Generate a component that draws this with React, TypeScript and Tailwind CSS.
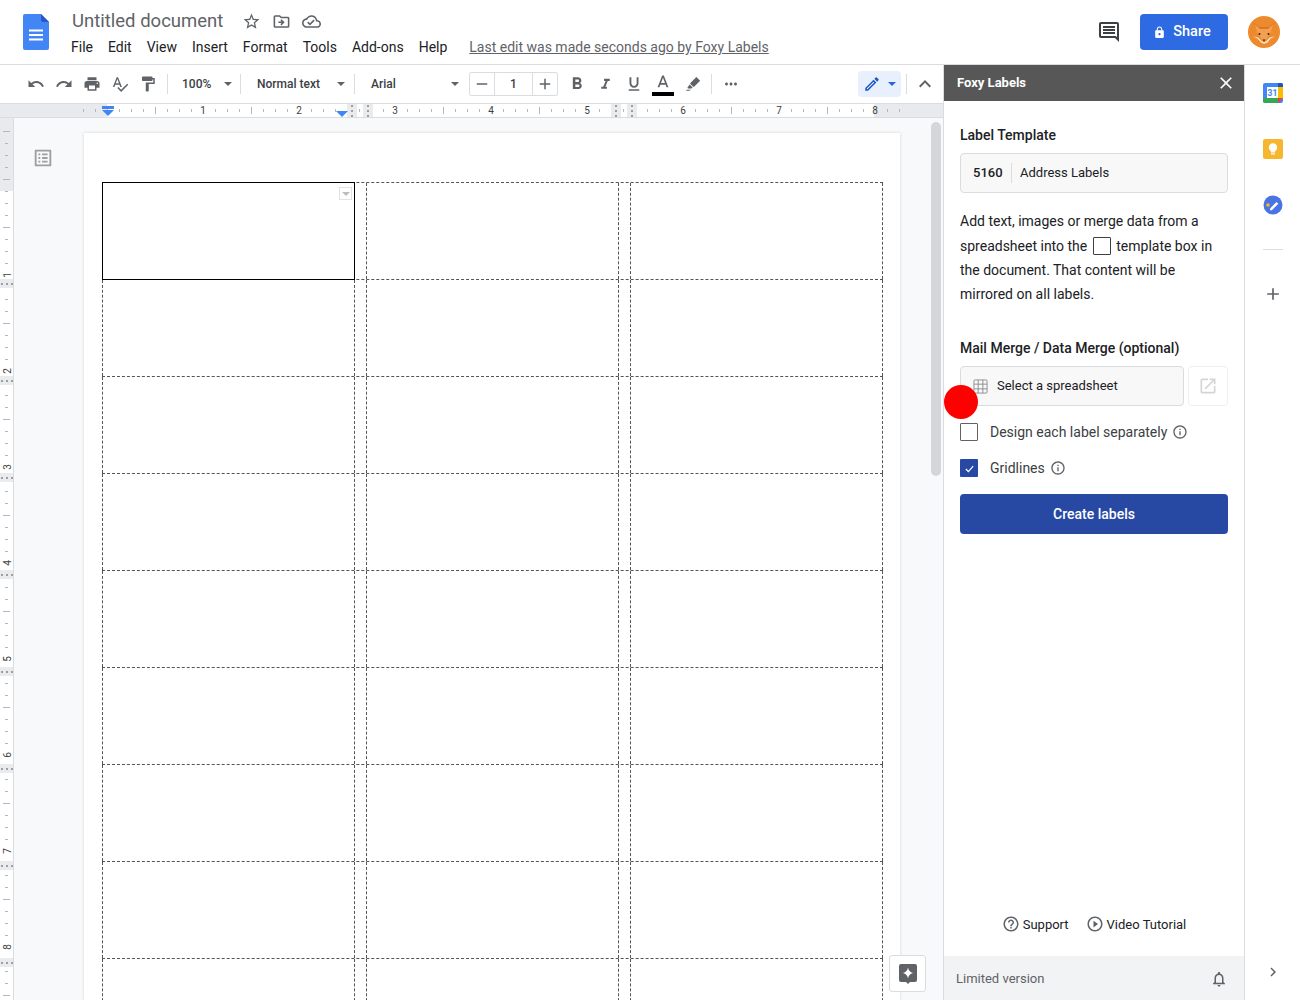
import type { ReactNode } from "react"

const paths = {
  undo: "M12.5 8c-2.65 0-5.05.99-6.9 2.6L2 7v9h9l-3.62-3.62c1.39-1.16 3.16-1.88 5.12-1.88 3.54 0 6.55 2.31 7.6 5.5l2.37-.78C21.08 11.03 17.15 8 12.5 8z",
  redo: "M18.4 10.6C16.55 8.99 14.15 8 11.5 8c-4.65 0-8.58 3.03-9.96 7.22L3.9 16c1.05-3.19 4.05-5.5 7.6-5.5 1.95 0 3.73.72 5.12 1.88L13 16h9V7l-3.6 3.6z",
  print: "M19 8H5c-1.66 0-3 1.34-3 3v6h4v4h12v-4h4v-6c0-1.66-1.34-3-3-3zm-3 11H8v-5h8v5zm3-7c-.55 0-1-.45-1-1s.45-1 1-1 1 .45 1 1-.45 1-1 1zm-1-9H6v4h12V3z",
  spell: "M12.45 16h2.09L9.43 3H7.57L2.46 16h2.09l1.12-3h5.64l1.14 3zm-6.02-5L8.5 5.48 10.57 11H6.43zm15.16.59l-8.09 8.09L9.83 16l-1.41 1.41 5.09 5.09L23 13l-1.41-1.41z",
  paint: "M18 4V3c0-.55-.45-1-1-1H5c-.55 0-1 .45-1 1v4c0 .55.45 1 1 1h12c.55 0 1-.45 1-1V6h1v4H9v11c0 .55.45 1 1 1h2c.55 0 1-.45 1-1v-9h8V4h-3z",
  bold: "M15.6 10.79c.97-.67 1.65-1.77 1.65-2.79 0-2.26-1.75-4-4-4H7v14h7.04c2.09 0 3.71-1.7 3.71-3.79 0-1.52-.86-2.82-2.15-3.42zM10 6.5h3c.83 0 1.5.67 1.5 1.5s-.67 1.5-1.5 1.5h-3v-3zm3.5 9H10v-3h3.5c.83 0 1.5.67 1.5 1.5s-.67 1.5-1.5 1.5z",
  italic: "M10 4v3h2.21l-3.42 8H6v3h8v-3h-2.21l3.42-8H18V4z",
  underline: "M12 17c3.31 0 6-2.69 6-6V3h-2.5v8c0 1.93-1.57 3.5-3.5 3.5S8.5 12.93 8.5 11V3H6v8c0 3.31 2.69 6 6 6zm-7 2v2h14v-2H5z",
  letterA: "M11 3L5.5 17h2.25l1.12-3h6.25l1.12 3h2.25L13 3h-2zm-1.38 9L12 5.67 14.38 12H9.62z",
  marker: "M16.5 2.5l5 5-8 8-1.200.3-4.100-4.100.3-1.200zM7.500 12.500l4 4-1.600 1.600H5.500l-1-1z M3 19.500h6l-1.500 1.500H3z",
  edit: "M14.06 9.02l.92.92L5.92 19H5v-.92l9.06-9.06M17.66 3c-.25 0-.51.1-.7.29l-1.83 1.83 3.75 3.75 1.83-1.83c.39-.39.39-1.02 0-1.41l-2.34-2.34c-.2-.2-.45-.29-.71-.29zm-3.6 3.19L3 17.25V21h3.75L17.81 9.94l-3.75-3.75z",
  lock: "M18 8h-1V6c0-2.76-2.24-5-5-5S7 3.24 7 6v2H6c-1.1 0-2 .9-2 2v10c0 1.1.9 2 2 2h12c1.1 0 2-.9 2-2V10c0-1.1-.9-2-2-2zm-6 9c-1.1 0-2-.9-2-2s.9-2 2-2 2 .9 2 2-.9 2-2 2zm3.1-9H8.9V6c0-1.71 1.39-3.1 3.1-3.1 1.71 0 3.1 1.39 3.1 3.1v2z",
  comment: "M21.99 4c0-1.1-.89-2-1.99-2H4c-1.1 0-2 .9-2 2v12c0 1.1.9 2 2 2h14l4 4-.01-18zM20 4v13.17L18.83 16H4V4h16zM6 12h12v2H6zm0-3h12v2H6zm0-3h12v2H6z",
  star: "M22 9.24l-7.19-.62L12 2 9.19 8.63 2 9.24l5.46 4.73L5.82 21 12 17.27 18.18 21l-1.63-7.03L22 9.24zM12 15.4l-3.76 2.27 1-4.28-3.32-2.88 4.38-.38L12 6.1l1.71 4.04 4.38.38-3.32 2.88 1 4.28L12 15.4z",
  move: "M20 6h-8l-2-2H4c-1.1 0-2 .9-2 2v12c0 1.1.9 2 2 2h16c1.1 0 2-.9 2-2V8c0-1.1-.9-2-2-2zm0 12H4V6h5.17l2 2H20v10zm-8.01-9l-1.41 1.41L12.16 12H8v2h4.16l-1.59 1.59L11.99 17 16 13.01 11.99 9z",
  cloud: "M19.35 10.04C18.67 6.59 15.64 4 12 4 9.11 4 6.6 5.64 5.35 8.04 2.34 8.36 0 10.91 0 14c0 3.31 2.69 6 6 6h13c2.76 0 5-2.24 5-5 0-2.64-2.05-4.78-4.65-4.96zM19 18H6c-2.21 0-4-1.79-4-4 0-2.05 1.53-3.76 3.56-3.97l1.07-.11.5-.95C8.08 7.14 9.94 6 12 6c2.62 0 4.88 1.86 5.39 4.43l.3 1.5 1.53.11c1.56.1 2.78 1.41 2.78 2.96 0 1.65-1.35 3-3 3zm-9-3.82l-2.09-2.09L6.5 13.5 10 17l6.01-6.01-1.41-1.41z",
  info: "M11 7h2v2h-2zm0 4h2v6h-2zm1-9C6.48 2 2 6.48 2 12s4.48 10 10 10 10-4.48 10-10S17.52 2 12 2zm0 18c-4.41 0-8-3.59-8-8s3.59-8 8-8 8 3.59 8 8-3.59 8-8 8z",
  help: "M11 18h2v-2h-2v2zm1-16C6.48 2 2 6.48 2 12s4.48 10 10 10 10-4.48 10-10S17.52 2 12 2zm0 18c-4.41 0-8-3.59-8-8s3.59-8 8-8 8 3.59 8 8-3.59 8-8 8zm0-14c-2.21 0-4 1.79-4 4h2c0-1.1.9-2 2-2s2 .9 2 2c0 2-3 1.75-3 5h2c0-2.25 3-2.5 3-5 0-2.21-1.79-4-4-4z",
  play: "M10 16.5l6-4.5-6-4.5v9zM12 2C6.48 2 2 6.48 2 12s4.48 10 10 10 10-4.48 10-10S17.52 2 12 2zm0 18c-4.41 0-8-3.59-8-8s3.59-8 8-8 8 3.59 8 8-3.59 8-8 8z",
  bell: "M12 22c1.1 0 2-.9 2-2h-4c0 1.1.9 2 2 2zm6-6v-5c0-3.07-1.63-5.64-4.5-6.32V4c0-.83-.67-1.5-1.5-1.5s-1.5.67-1.5 1.5v.68C7.64 5.36 6 7.92 6 11v5l-2 2v1h16v-1l-2-2zm-2 1H8v-6c0-2.48 1.51-4.5 4-4.5s4 2.02 4 4.5v6z",
  listAlt: "M19 5v14H5V5h14m1.1-2H3.9c-.5 0-.9.4-.9.9v16.2c0 .4.4.9.9.9h16.2c.4 0 .9-.5.9-.9V3.9c0-.5-.5-.9-.9-.9zM11 7h6v2h-6V7zm0 4h6v2h-6v-2zm0 4h6v2h-6zM7 7h2v2H7zm0 4h2v2H7zm0 4h2v2H7z",
  openNew: "M19 19H5V5h7V3H5c-1.11 0-2 .9-2 2v14c0 1.1.89 2 2 2h14c1.1 0 2-.9 2-2v-7h-2v7zM14 3v2h3.59l-9.83 9.83 1.41 1.41L19 6.41V10h2V3h-7z",
  close: "M19 6.41L17.59 5 12 10.59 6.41 5 5 6.41 10.59 12 5 17.59 6.41 19 12 13.41 17.59 19 19 17.59 13.41 12z",
  plus: "M19 13h-6v6h-2v-6H5v-2h6V5h2v6h6v2z",
  minus: "M19 13H5v-2h14v2z",
  more: "M6 10c-1.1 0-2 .9-2 2s.9 2 2 2 2-.9 2-2-.9-2-2-2zm12 0c-1.1 0-2 .9-2 2s.9 2 2 2 2-.9 2-2-.9-2-2-2zm-6 0c-1.1 0-2 .9-2 2s.9 2 2 2 2-.9 2-2-.9-2-2-2z",
  chevUp: "M7.41 15.41L12 10.83l4.59 4.58L18 14l-6-6-6 6z",
  chevRight: "M8.59 16.59L13.17 12 8.59 7.41 10 6l6 6-6 6z",
}

function Mi({ d, className }: { d: string; className: string }) {
  return (
    <svg viewBox="0 0 24 24" fill="currentColor" className={className}>
      <path d={d} />
    </svg>
  )
}

function Caret({ className = "border-t-[#5f6368]" }: { className?: string }) {
  return <span className={`w-0 h-0 shrink-0 border-x-4 border-x-transparent border-t-4 ${className}`} />
}

function Tool({ d, size = "w-[18px] h-[18px]", w = "w-7" }: { d: string; size?: string; w?: string }) {
  return (
    <span className={`${w} h-6 flex items-center justify-center text-[#5f6368] shrink-0`}>
      <Mi d={d} className={size} />
    </span>
  )
}

function Sep({ className = "" }: { className?: string }) {
  return <span className={`w-px h-5 bg-[#dadce0] shrink-0 ${className}`} />
}

function DocsLogo() {
  return (
    <svg viewBox="0 0 26 36" className="w-[26px] h-9">
      <path d="M2 0h16l8 8v26a2 2 0 0 1-2 2H2a2 2 0 0 1-2-2V2a2 2 0 0 1 2-2z" fill="#4285f4" />
      <path d="M18 0l8 8h-6a2 2 0 0 1-2-2z" fill="#2a56c6" />
      <path d="M6 15.5h14v2H6zM6 20h14v2H6zM6 24.5h14v2H6z" fill="#fff" />
    </svg>
  )
}

function FoxAvatar() {
  return (
    <svg viewBox="0 0 32 32" className="w-8 h-8">
      <circle cx="16" cy="16" r="16" fill="#ee8a2e" />
      <path d="M5 6l5 10h12l5-10-6 5h-10z" fill="#d9762a" />
      <path d="M6.5 8l3.5 10 6 9 6-9 3.5-10-5.5 5h-8z" fill="#f5a04e" />
      <path d="M3 20c4-1 7 0 9.5 3.5l3.5 2.5 3.5-2.5C22 20 25 19 29 20c-2 4-5 8-13 10-8-2-11-6-13-10z" fill="#ee8a2e" />
      <path d="M5 21c4-1 6 1 8.5 4l2.5 1.5 2.5-1.5c2.5-3 4.500-5 8.500-4-3 0-5 2-7.500 5.500L16 28l-3-1.500C10.500 23 8 21 5 21z" fill="#fde3c4" />
      <circle cx="11.500" cy="18" r="1" fill="#222" />
      <circle cx="20.500" cy="18" r="1" fill="#222" />
      <path d="M14.500 23.500h3L16 25.500z" fill="#222" />
    </svg>
  )
}

function CalendarIcon() {
  return (
    <svg viewBox="0 0 20 20" className="w-5 h-5">
      <rect x="0" y="0" width="20" height="20" rx="2" fill="#4285f4" />
      <rect x="15" y="4" width="5" height="12" fill="#fbbc04" />
      <path d="M0 15h15v5H2a2 2 0 0 1-2-2z" fill="#34a853" />
      <path d="M15 15h5l-5 5z" fill="#ea4335" />
      <path d="M15 0h3a2 2 0 0 1 2 2v2h-5z" fill="#1a56c4" />
      <rect x="4" y="4" width="11" height="11" fill="#fff" />
      <text x="9.500" y="13" textAnchor="middle" fontSize="8.500" fontWeight="700" fill="#4285f4" className="font-['Roboto',sans-serif]">31</text>
    </svg>
  )
}

function KeepIcon() {
  return (
    <svg viewBox="0 0 20 20" className="w-5 h-5">
      <rect width="20" height="20" rx="2" fill="#f6b72f" />
      <circle cx="10" cy="8.500" r="4.200" fill="#fff" />
      <rect x="8" y="12" width="4" height="1.500" fill="#fff" />
      <rect x="8" y="14.300" width="4" height="1.200" fill="#fff" />
    </svg>
  )
}

function TasksIcon() {
  return (
    <svg viewBox="0 0 20 20" className="w-5 h-5">
      <circle cx="10" cy="10" r="9.500" fill="#4a74e4" />
      <circle cx="5" cy="10" r="1.800" fill="#fbbc04" />
      <path d="M7 13.500l6.500-6.500 1.800 1.800-6.500 6.500H7z" fill="#fff" />
    </svg>
  )
}

function Handle({ vertical = false }: { vertical?: boolean }) {
  return (
    <span className={`flex items-center justify-center bg-[#eaebec] ${vertical ? "flex-col gap-[3px] w-[10px] h-[14px]" : "gap-[3px] w-[13px] h-[9px]"}`}>
      <i className="w-[2px] h-[2px] bg-[#9aa0a6]" />
      <i className="w-[2px] h-[2px] bg-[#9aa0a6]" />
      <i className="w-[2px] h-[2px] bg-[#9aa0a6]" />
    </span>
  )
}

const xTicks = Array.from({ length: 69 }, (_, i) => 83 + i * 12)
const yTicks = Array.from({ length: 73 }, (_, i) => 131 + i * 12)
const inchNums = [1, 2, 3, 4, 5, 6, 7, 8]
const rowLines = [279, 376, 473, 570, 667, 764, 861, 958]

function TopRuler() {
  return (
    <div className="relative h-[15px] shrink-0 bg-white border-y border-[#dadce0] overflow-hidden">
      <div className="absolute left-0 top-0 bottom-0 w-[107px] bg-[#e8eaed]" />
      <div className="absolute left-[874px] right-0 top-0 bottom-0 bg-[#e8eaed]" />
      {xTicks.map((x) => {
        const inch = (x - 107) / 96
        if (inch > 0 && Number.isInteger(inch)) return null
        const half = Number.isInteger(inch * 2) && inch > 0
        return (
          <i
            key={x}
            className="absolute w-px bg-[#b4b7bb]"
            style={{ left: x, top: half ? 3 : 5, height: half ? 7 : 3 }}
          />
        )
      })}
      {inchNums.map((n) => (
        <span
          key={n}
          className="absolute top-0 w-4 -ml-2 text-center text-[10px] leading-[13px] text-[#3c4043] bg-transparent"
          style={{ left: 107 + n * 96 }}
        >
          {n}
        </span>
      ))}
      {[347, 363, 611, 627].map((x) => (
        <span key={x} className="absolute top-0" style={{ left: x }}>
          <Handle vertical />
        </span>
      ))}
      <div className="absolute left-[102px] top-[2px] w-3 h-[3px] bg-[#4285f4]" />
      <div className="absolute left-[102px] top-[6px] w-0 h-0 border-x-[6px] border-x-transparent border-t-[6px] border-t-[#4285f4]" />
      <div className="absolute left-[336px] top-[7px] w-0 h-0 border-x-[6px] border-x-transparent border-t-[6px] border-t-[#4285f4]" />
    </div>
  )
}

function SideRuler() {
  return (
    <div className="relative w-[14px] shrink-0 border-r border-[#dadce0] bg-white overflow-hidden">
      <div className="absolute left-0 right-0 top-0 h-[73px] bg-[#e8eaed]" />
      {yTicks.map((y) => {
        const inch = (y - 179) / 96
        if (inch > 0 && Number.isInteger(inch)) return null
        const half = Number.isInteger(inch * 2)
        return (
          <i
            key={y}
            className="absolute h-px bg-[#b4b7bb]"
            style={{ top: y - 118, left: half ? 3 : 5, width: half ? 7 : 3 }}
          />
        )
      })}
      {inchNums.map((n) => (
        <span
          key={n}
          className="absolute left-0 w-[15px] -mt-2 h-4 text-center text-[10px] leading-4 text-[#3c4043] -rotate-90"
          style={{ top: 179 + n * 96 - 118 }}
        >
          {n}
        </span>
      ))}
      {rowLines.map((y) => (
        <span key={y} className="absolute left-0" style={{ top: y - 118 }}>
          <Handle />
        </span>
      ))}
    </div>
  )
}

function LabelRow({ first = false }: { first?: boolean }) {
  const cell = "h-[96px] w-[253px] border-x border-dashed border-[#555]"
  return (
    <div className="flex gap-[11px] w-[781px] border-t border-dashed border-[#555]">
      {first ? (
        <div className="relative z-10 -mt-px h-[98px] w-[253px] border border-black -mb-px">
          <span className="absolute right-[2px] top-[4px] w-[13px] h-[13px] border border-[#e3e3e3] flex items-center justify-center">
            <Caret className="border-t-[#bdbdbd]" />
          </span>
        </div>
      ) : (
        <div className={cell} />
      )}
      <div className={cell} />
      <div className={cell} />
    </div>
  )
}

function Page() {
  const rows = [0, 1, 2, 3, 4, 5, 6, 7, 8]
  return (
    <div className="w-[816px] shrink-0 mt-[15px] pt-[49px] pl-[18px] bg-white shadow-[0_0_3px_rgba(60,64,67,0.2)]">
      {rows.map((r) => (
        <LabelRow key={r} first={r === 0} />
      ))}
    </div>
  )
}

function Toolbar() {
  const selectText = "text-xs font-medium text-[#3c4043] shrink-0"
  return (
    <div className="h-[38px] shrink-0 flex items-center pl-[22px]">
      <Tool d={paths.undo} />
      <Tool d={paths.redo} />
      <Tool d={paths.print} />
      <Tool d={paths.spell} />
      <Tool d={paths.paint} />
      <Sep className="ml-[5px]" />
      <span className={`${selectText} ml-[14px] w-[42px]`}>100%</span>
      <Caret />
      <Sep className="ml-[8px]" />
      <span className={`${selectText} ml-[16px] w-[80px]`}>Normal text</span>
      <Caret />
      <Sep className="ml-[9px]" />
      <span className={`${selectText} ml-[16px] w-[80px]`}>Arial</span>
      <Caret />
      <div className="ml-[10px] w-[89px] h-6 flex items-center border border-[#dadce0] rounded-[2px] shrink-0">
        <span className="w-6 h-full flex items-center justify-center text-[#5f6368]">
          <Mi d={paths.minus} className="w-[18px] h-[18px]" />
        </span>
        <span className="flex-1 h-full flex items-center justify-center border-x border-[#dadce0] text-xs font-medium text-[#3c4043]">1</span>
        <span className="w-6 h-full flex items-center justify-center text-[#5f6368]">
          <Mi d={paths.plus} className="w-[18px] h-[18px]" />
        </span>
      </div>
      <span className="w-[4px] shrink-0" />
      <Tool d={paths.bold} size="w-5 h-5" w="w-[29px]" />
      <Tool d={paths.italic} size="w-[17px] h-[17px]" w="w-[29px]" />
      <Tool d={paths.underline} w="w-[28px]" />
      <span className="relative w-[30px] h-6 flex items-center justify-center text-[#5f6368] shrink-0">
        <Mi d={paths.letterA} className="w-5 h-5 -mt-[3px]" />
        <span className="absolute left-[4px] bottom-0 w-[22px] h-[4px] bg-black" />
      </span>
      <Tool d={paths.marker} w="w-[30px]" />
      <Sep className="ml-[3px]" />
      <Tool d={paths.more} w="w-[37px]" size="w-[18px] h-[18px]" />
      <span className="w-[109px] shrink-0" />
      <div className="w-[43px] h-[26px] rounded-[4px] bg-[#e8f0fe] flex items-center pl-[5px] gap-[7px] shrink-0 text-[#1a56c4]">
        <Mi d={paths.edit} className="w-[18px] h-[18px]" />
        <Caret className="border-t-[#2a65d6]" />
      </div>
      <Sep className="ml-[5px]" />
      <Tool d={paths.chevUp} size="w-6 h-6" w="w-[36px]" />
    </div>
  )
}

function Header() {
  const menus = ["File", "Edit", "View", "Insert", "Format", "Tools", "Add-ons", "Help"]
  return (
    <header className="h-[65px] shrink-0 flex border-b border-[#dadce0] bg-white">
      <div className="w-[71px] pl-[23px] pt-[14px] shrink-0">
        <DocsLogo />
      </div>
      <div className="flex flex-col pt-[9px]">
        <div className="flex items-center h-6 pl-px">
          <span className="text-[18.5px] text-[#5f6368] leading-6 w-[169px]">Untitled document</span>
          <span className="flex gap-[11px] text-[#5f6368] ml-[1px]">
            <Mi d={paths.star} className="w-[19px] h-[19px]" />
            <Mi d={paths.move} className="w-[19px] h-[19px]" />
            <Mi d={paths.cloud} className="w-[19px] h-[19px]" />
          </span>
        </div>
        <nav className="flex items-center gap-[15px] mt-[4px] h-[20px] text-sm text-[#202124]">
          {menus.map((m) => (
            <span key={m}>{m}</span>
          ))}
          <span className="ml-[7px] text-[#5f6368] underline">Last edit was made seconds ago by Foxy Labels</span>
        </nav>
      </div>
      <div className="ml-auto flex items-center pr-[20px] -mt-px">
        <span className="text-[#3c4043] mr-[19px]">
          <Mi d={paths.comment} className="w-6 h-6" />
        </span>
        <button type="button" className="w-[88px] h-9 rounded-[4px] bg-[#2e6ae1] text-white flex items-center justify-center gap-[7px] pr-1 pt-px text-[14.5px] font-medium mr-[20px]">
          <Mi d={paths.lock} className="w-[13px] h-[13px]" />
          Share
        </button>
        <FoxAvatar />
      </div>
    </header>
  )
}

function InfoIcon() {
  return <Mi d={paths.info} className="w-4 h-4 text-[#5f6368]" />
}

function CheckRow({ checked, children }: { checked: boolean; children: ReactNode }) {
  return (
    <div className="flex items-center h-[18px] text-sm text-[#3c4043]">
      {checked ? (
        <span className="w-[18px] h-[18px] rounded-[1px] bg-[#2749a3] flex items-center justify-center">
          <svg viewBox="0 0 12 12" className="w-[11px] h-[11px]" fill="none" stroke="#fff" strokeWidth="1.300">
            <path d="M2 6.500l2.800 2.800L10 3.500" />
          </svg>
        </span>
      ) : (
        <span className="w-[18px] h-[18px] rounded-[1px] border-[1.5px] border-[#5f6368]" />
      )}
      <span className="ml-[12px] mr-[5px]">{children}</span>
      <InfoIcon />
    </div>
  )
}

function SidePanel() {
  return (
    <aside className="relative w-[302px] shrink-0 flex flex-col border-x border-[#dadce0] bg-white">
      <div className="h-9 shrink-0 bg-[#575757] flex items-center justify-between pl-[13px] pr-[8px] text-white">
        <span className="text-[13px] font-bold">Foxy Labels</span>
        <Mi d={paths.close} className="w-5 h-5" />
      </div>
      <div className="flex-1 flex flex-col px-4 text-[#202124]">
        <h2 className="mt-[25px] text-sm font-medium leading-[18px]">Label Template</h2>
        <div className="mt-[9px] h-10 flex items-center border border-[#dadce0] rounded-[4px] bg-[#f8f8f8] pl-3 text-[13px]">
          <span className="font-medium w-[38px]">5160</span>
          <span className="w-px h-5 bg-[#dadce0]" />
          <span className="ml-2">Address Labels</span>
        </div>
        <p className="mt-[16px] text-sm leading-6 text-[#202124]">
          <span className="block mb-px">Add text, images or merge data from a</span>
          spreadsheet into the
          <span className="inline-block align-[-4px] w-[18px] h-[18px] border border-[#3c4043] rounded-[1px] ml-[6px] mr-[5px]" />
          template box in
          <br />
          the document. That content will be
          <br />
          mirrored on all labels.
        </p>
        <h2 className="mt-[33px] text-sm font-medium leading-[18px]">Mail Merge / Data Merge (optional)</h2>
        <div className="mt-[9px] flex gap-[4px]">
          <div className="flex-1 h-10 flex items-center border border-[#dadce0] rounded-[4px] bg-[#f8f8f8] pl-3 text-[13px]">
            <svg viewBox="0 0 16 16" className="w-[15px] h-[15px]" fill="none" stroke="#8a8d91" strokeWidth="1">
              <rect x="1" y="1" width="14" height="14" rx="1" />
              <path d="M5.500 1v14M10.500 1v14M1 5.500h14M1 10.500h14" />
            </svg>
            <span className="ml-[9px]">Select a spreadsheet</span>
          </div>
          <div className="w-10 h-10 flex items-center justify-center border border-[#eeeeee] rounded-[4px] text-[#d5d5d5]">
            <Mi d={paths.openNew} className="w-[20px] h-[20px]" />
          </div>
        </div>
        <div className="mt-[17px] flex flex-col gap-[18px]">
          <CheckRow checked={false}>Design each label separately</CheckRow>
          <CheckRow checked>Gridlines</CheckRow>
        </div>
        <button type="button" className="mt-[17px] h-10 rounded-[4px] bg-[#2749a3] text-white text-sm font-medium">
          Create labels
        </button>
        <div className="mt-auto mb-[22px] flex items-center justify-center gap-[17px] text-[13px] text-[#202124]">
          <span className="flex items-center gap-[3px]">
            <Mi d={paths.help} className="w-[18px] h-[18px] text-[#5f6368]" />
            Support
          </span>
          <span className="flex items-center gap-[3px]">
            <Mi d={paths.play} className="w-[18px] h-[18px] text-[#5f6368]" />
            Video Tutorial
          </span>
        </div>
      </div>
      <div className="h-11 shrink-0 bg-[#f1f3f4] flex items-center justify-between pl-3 pr-[16px] pt-px text-[13px] text-[#5f6368]">
        <span>Limited version</span>
        <Mi d={paths.bell} className="w-[18px] h-[18px]" />
      </div>
      {/* the red cursor dot sits over the panel */}
      <span className="absolute left-0 top-[320px] w-[34px] h-[34px] rounded-full bg-[#ff0000]" />
    </aside>
  )
}

function AddonRail() {
  return (
    <div className="w-[55px] shrink-0 flex flex-col items-center text-[#5f6368] pt-[18px]">
      <CalendarIcon />
      <span className="mt-[36px]"><KeepIcon /></span>
      <span className="mt-[36px]"><TasksIcon /></span>
      <span className="mt-[34px] w-5 h-px bg-[#dadce0]" />
      <span className="mt-[34px]"><Mi d={paths.plus} className="w-[20px] h-[20px]" /></span>
      <span className="mt-auto mb-[19px]"><Mi d={paths.chevRight} className="w-[18px] h-[18px]" /></span>
    </div>
  )
}

export default function App() {
  return (
    <div className="w-[1300px] h-[1000px] overflow-hidden flex flex-col bg-white font-['Roboto',sans-serif]">
      <Header />
      <div className="flex-1 flex min-h-0">
        <main className="w-[943px] shrink-0 flex flex-col min-h-0">
          <Toolbar />
          <TopRuler />
          <div className="relative flex-1 flex min-h-0 overflow-hidden bg-[#f8f9fa]">
            <SideRuler />
            <div className="w-[70px] shrink-0 pt-[29px] pl-[18px] text-[#9e9e9e]">
              <Mi d={paths.listAlt} className="w-[22px] h-[22px]" />
            </div>
            <Page />
            <span className="absolute left-[931px] top-[4px] w-[10px] h-[354px] rounded-[5px] bg-[#d5d6d9]" />
            <button type="button" className="absolute left-[889px] bottom-[8px] w-[37px] h-[37px] rounded-[3px] bg-white border border-[#dadce0] flex items-center justify-center">
              <svg viewBox="0 0 18 20" className="w-[18px] h-5">
                <path d="M2 0h14a2 2 0 0 1 2 2v14a2 2 0 0 1-2 2h-5l-2 2-2-2H2a2 2 0 0 1-2-2V2a2 2 0 0 1 2-2z" fill="#5f6368" />
                <path d="M9 3.500c.5 3 2 4.500 5 5.500-3 1-4.500 2.500-5 5.500-.5-3-2-4.500-5-5.500 3-1 4.500-2.500 5-5.500z" fill="#fff" />
              </svg>
            </button>
          </div>
        </main>
        <SidePanel />
        <AddonRail />
      </div>
    </div>
  )
}
